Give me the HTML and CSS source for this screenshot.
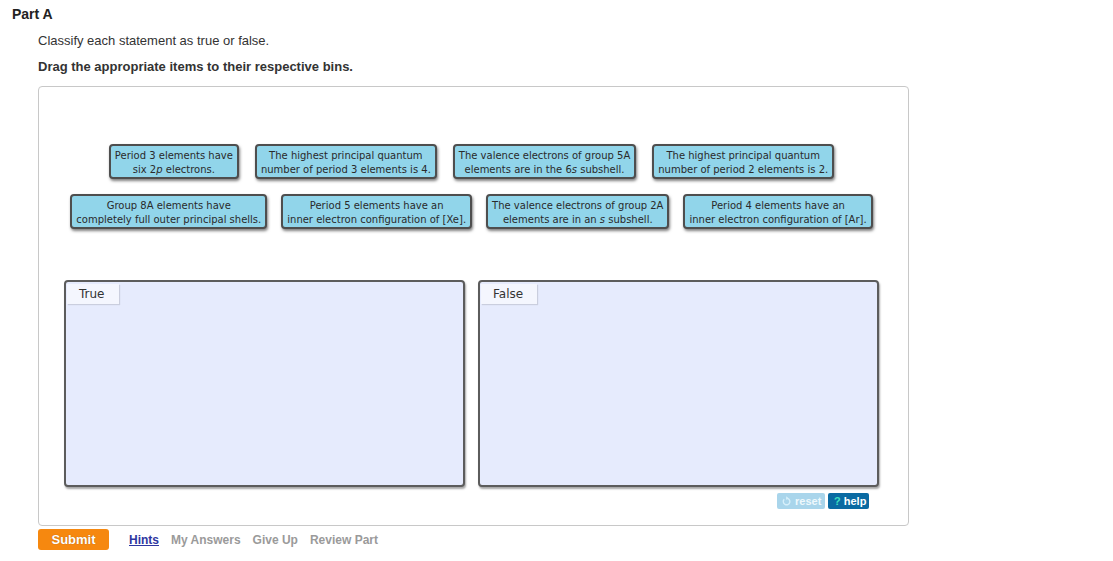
FILE: index.html
```html
<!DOCTYPE html>
<html>
<head>
<meta charset="utf-8">
<link rel="stylesheet" href="styles.css">
</head>
<body>
<h2 class="part-title">Part A</h2>
<div class="content">
  <p class="instr">Classify each statement as true or false.</p>
  <p class="instr instr-bold">Drag the appropriate items to their respective bins.</p>
  <div class="dnd-box">
    <div class="card-row">
      <div class="card">Period 3 elements have<br>six 2<i>p</i> electrons.</div>
      <div class="card">The highest principal quantum<br>number of period 3 elements is 4.</div>
      <div class="card">The valence electrons of group 5A<br>elements are in the 6<i>s</i> subshell.</div>
      <div class="card">The highest principal quantum<br>number of period 2 elements is 2.</div>
    </div>
    <div class="card-row row-2">
      <div class="card">Group 8A elements have<br>completely full outer principal shells.</div>
      <div class="card">Period 5 elements have an<br>inner electron configuration of [Xe].</div>
      <div class="card">The valence electrons of group 2A<br>elements are in an <i>s</i> subshell.</div>
      <div class="card">Period 4 elements have an<br>inner electron configuration of [Ar].</div>
    </div>
    <div class="bins">
      <div class="bin"><span class="bin-label">True</span></div>
      <div class="bin"><span class="bin-label">False</span></div>
    </div>
    <div class="tools">
      <span class="btn-reset"><svg class="reset-icon" width="9" height="10" viewBox="0 0 9 10"><path d="M2.2 3.2 A3.3 3.3 0 1 0 4.5 2.2" fill="none" stroke="#d6effa" stroke-width="1.4"/><path d="M4.2 0.3 L6.6 2.2 L4.2 4.1 Z" fill="#d6effa"/></svg>reset</span>
      <span class="btn-help"><span class="q">?</span> help</span>
    </div>
  </div>
  <div class="footer">
    <span class="submit">Submit</span>
    <a class="link link-active">Hints</a>
    <a class="link">My Answers</a>
    <a class="link">Give Up</a>
    <a class="link">Review Part</a>
  </div>
</div>
</body>
</html>
```
FILE: styles.css
```css
html, body {
  margin: 0;
  padding: 0;
  background: #ffffff;
}
body {
  font-family: "Liberation Sans", Arial, sans-serif;
  color: #333333;
}
.part-title {
  margin: 0;
  padding: 6px 0 0 12px;
  font-size: 14px;
  line-height: 16px;
  font-weight: bold;
  color: #222222;
}
.content {
  padding-left: 38px;
  width: 871px;
}
.instr {
  margin: 11px 0 0 0;
  font-size: 13px;
  line-height: 15px;
  color: #333333;
}
.instr-bold {
  font-weight: bold;
}
.dnd-box {
  margin-top: 12px;
  width: 869px;
  border: 1px solid #c8c8c8;
  border-radius: 4px;
  padding: 57px 0 16px 0;
}
.card-row {
  display: flex;
  justify-content: center;
  gap: 16px;
  padding-right: 4px;
}
.row-2 {
  margin-top: 15px;
  gap: 14px;
}
.card {
  font-family: "DejaVu Sans", Verdana, sans-serif;
  font-size: 10px;
  line-height: 14px;
  color: #2a2a2a;
  text-align: center;
  white-space: nowrap;
  background: #91d5ea;
  border: 2px solid #4e4e4e;
  border-radius: 4px;
  padding: 3px 4px 0 4px;
  box-shadow: 1px 2px 3px rgba(0, 0, 0, 0.5);
}
.card i {
  font-style: italic;
}
.bins {
  display: flex;
  gap: 13px;
  margin-top: 51px;
  padding-left: 25px;
}
.bin {
  width: 396px;
  height: 201px;
  background: #e6ebfd;
  border: 2px solid #5c5c5c;
  border-radius: 4px;
  box-shadow: 1px 2px 2px rgba(0, 0, 0, 0.35);
  padding: 2px 0 0 1px;
}
.bin-label {
  display: inline-block;
  font-family: "DejaVu Sans", Verdana, sans-serif;
  font-size: 12px;
  line-height: 20px;
  color: #333333;
  background: #f4f6fe;
  padding: 0 14px 0 12px;
  box-shadow: 1px 1px 1px rgba(0, 0, 0, 0.12);
}
.tools {
  display: flex;
  justify-content: flex-end;
  gap: 3px;
  margin-top: 6px;
  padding-right: 39px;
  height: 16px;
}
.btn-reset, .btn-help {
  display: flex;
  align-items: center;
  height: 16px;
  font-size: 11px;
  font-weight: bold;
  color: #ffffff;
  box-sizing: border-box;
}
.btn-reset {
  width: 48px;
  background: #a9d5eb;
  color: #eef8fc;
  padding-left: 5px;
  border-radius: 2px;
}
.reset-icon {
  margin-right: 4px;
}
.btn-help {
  width: 41px;
  background: #0a6aa2;
  padding-left: 6px;
  border-radius: 2px;
}
.btn-help .q {
  color: #3fe0c0;
  margin-right: 3px;
}
.footer {
  display: flex;
  align-items: center;
  margin-top: 3px;
  height: 21px;
}
.submit {
  display: inline-block;
  width: 71px;
  height: 21px;
  line-height: 21px;
  text-align: center;
  font-size: 13px;
  font-weight: bold;
  color: #ffffff;
  background: #f6880f;
  border-radius: 3px;
  text-shadow: 0 0 1px rgba(120, 60, 0, 0.6);
  margin-right: 20px;
}
.link {
  font-size: 12px;
  font-weight: bold;
  color: #9a9a9a;
  margin-right: 12px;
  text-decoration: none;
}
.link-active {
  color: #2e36a0;
  text-decoration: underline;
}
```
